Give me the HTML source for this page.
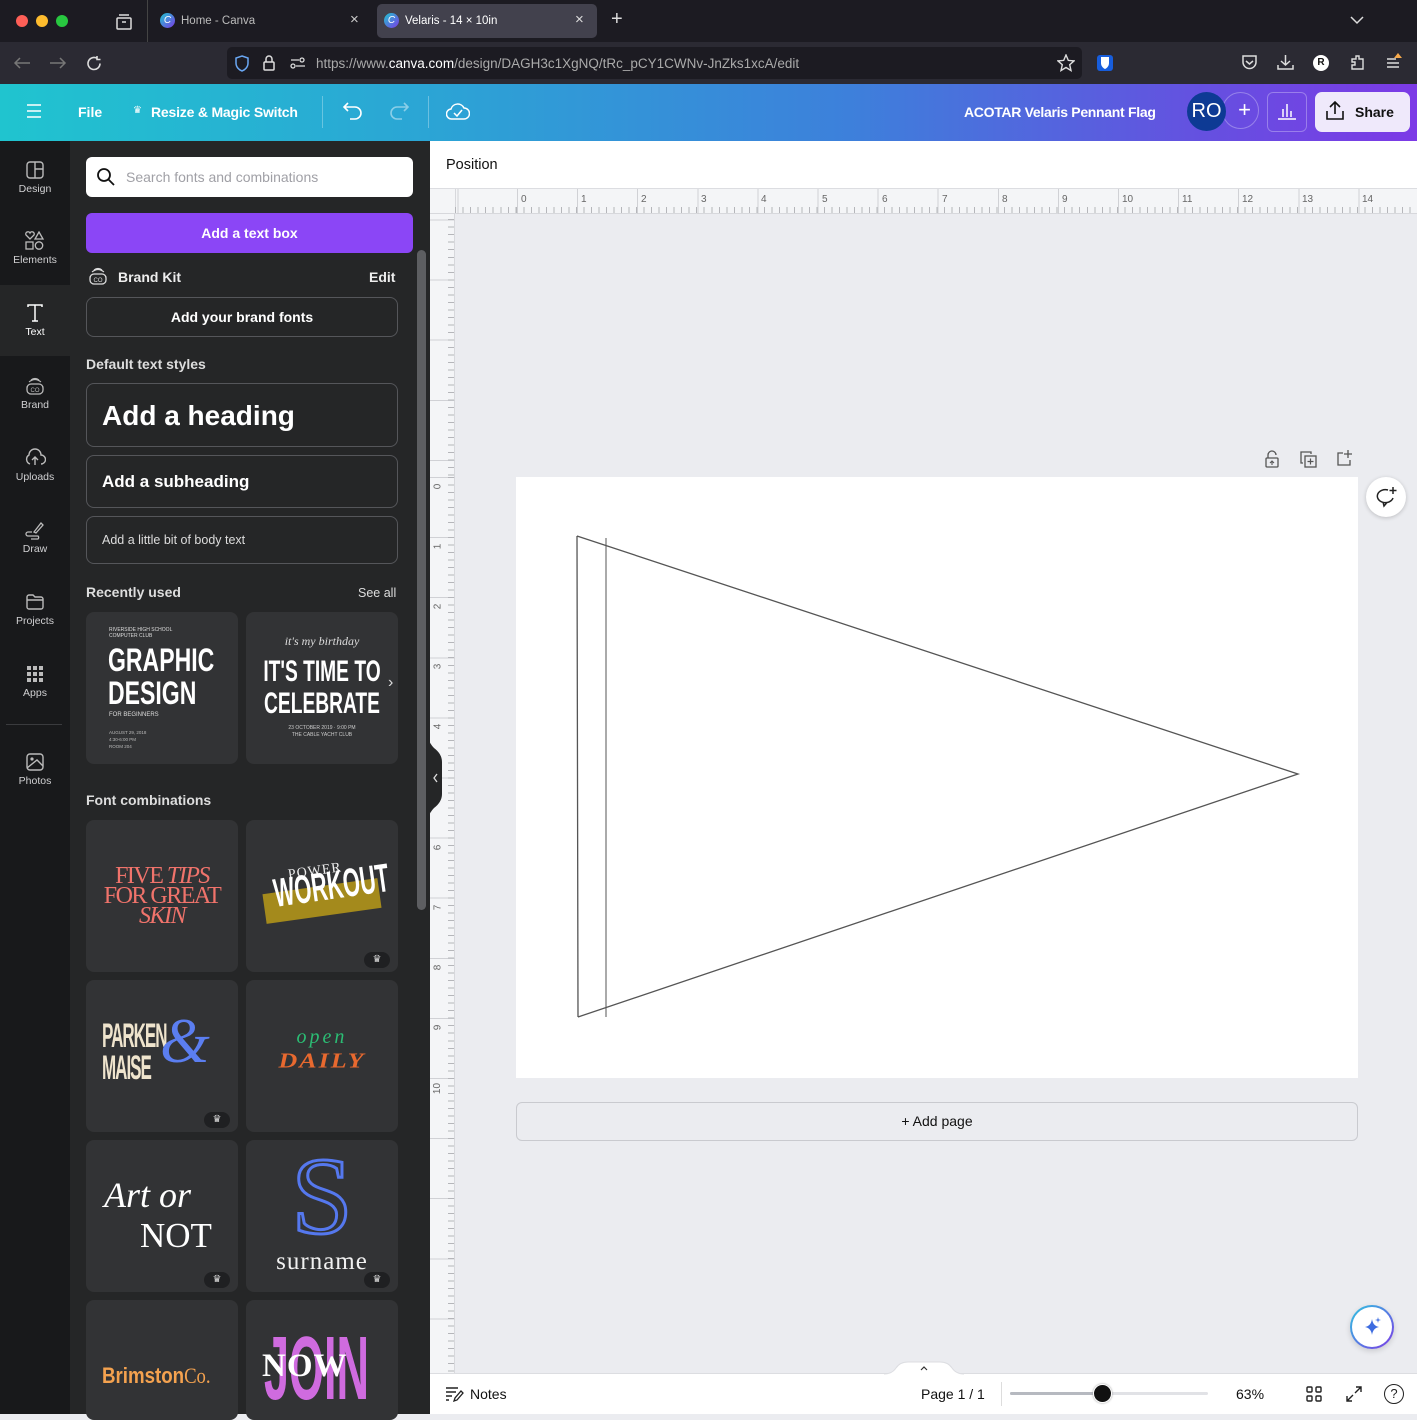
<!DOCTYPE html>
<html><head><meta charset="utf-8">
<style>
*{box-sizing:border-box;margin:0;padding:0}
body{width:1417px;height:1414px;overflow:hidden;position:relative;font-family:"Liberation Sans",sans-serif;background:#ebecf0}
.a{position:absolute}
.w{color:#fff}
.rail{left:0;top:141px;width:70px;height:1273px;background:#18191b}
.ri{position:absolute;left:0;width:70px;text-align:center;color:#d0d0d2;font-size:10.5px}
.ri svg{display:block;margin:0 auto 3px}
.panel{left:70px;top:141px;width:360px;height:1273px;background:#252627}
.card{position:absolute;width:152px;height:152px;background:#323335;border-radius:8px;overflow:hidden}
.crown{position:absolute;right:8px;bottom:4px;width:26px;height:16px;border-radius:8px;background:#1f2022;color:#ddd;font-size:10px;text-align:center;line-height:16px}
.ob{position:absolute;left:86px;width:312px;border:1px solid #55565a;border-radius:8px;color:#fff}
.tl{position:absolute;color:#666;font-size:10px}
.nw{white-space:nowrap}
</style></head><body>
<div class="a" style="left:0;top:0;width:1417px;height:42px;background:#1c1b22"></div>
<div class="a" style="left:16px;top:15px;width:12px;height:12px;border-radius:6px;background:#fe5f57"></div>
<div class="a" style="left:36px;top:15px;width:12px;height:12px;border-radius:6px;background:#febc2e"></div>
<div class="a" style="left:56px;top:15px;width:12px;height:12px;border-radius:6px;background:#28c840"></div>
<svg class="a" style="left:115px;top:13px" width="18" height="17"><rect x="2" y="5" width="14" height="11" fill="none" stroke="#ddd" stroke-width="1.5" rx="1"/><line x1="4" y1="2" x2="14" y2="2" stroke="#ddd" stroke-width="1.5"/><line x1="7" y1="9" x2="11" y2="9" stroke="#ddd" stroke-width="1.5"/></svg>
<div class="a" style="left:147px;top:0;width:1px;height:42px;background:#444"></div>
<div class="a" style="left:160px;top:13px;width:15px;height:15px;border-radius:8px;background:linear-gradient(135deg,#1fc6d0,#7c3ae6);color:#fff;font-size:10px;text-align:center;line-height:15px;font-style:italic">C</div>
<div class="a" style="left:181px;top:15px;color:#bbb;font-size:11.5px">Home - Canva</div>
<div class="a" style="left:350px;top:11px;color:#ccc;font-size:15px">×</div>
<div class="a" style="left:377px;top:4px;width:220px;height:34px;background:#42414d;border-radius:5px"></div>
<div class="a" style="left:384px;top:13px;width:15px;height:15px;border-radius:8px;background:linear-gradient(135deg,#1fc6d0,#7c3ae6);color:#fff;font-size:10px;text-align:center;line-height:15px;font-style:italic">C</div>
<div class="a w" style="left:405px;top:15px;font-size:11.5px">Velaris - 14 × 10in</div>
<div class="a" style="left:575px;top:11px;color:#ddd;font-size:15px">×</div>
<div class="a" style="left:611px;top:8px;color:#ddd;font-size:20px">+</div>
<svg class="a" style="left:1350px;top:15px" width="14" height="10"><path d="M1 2 L7 8 L13 2" fill="none" stroke="#ddd" stroke-width="1.5"/></svg>
<div class="a" style="left:0;top:42px;width:1417px;height:42px;background:#2b2a33"></div>
<svg class="a" style="left:13px;top:56px" width="18" height="14"><path d="M17 7 H2 M7 2 L2 7 L7 12" fill="none" stroke="#777" stroke-width="1.5"/></svg>
<svg class="a" style="left:49px;top:56px" width="18" height="14"><path d="M1 7 H16 M11 2 L16 7 L11 12" fill="none" stroke="#777" stroke-width="1.5"/></svg>
<svg class="a" style="left:86px;top:55px" width="17" height="17"><path d="M14 8.5 A6 6 0 1 1 11 3.3 M11 1 V4.5 H14.5" fill="none" stroke="#ddd" stroke-width="1.6"/></svg>
<div class="a" style="left:227px;top:47px;width:855px;height:32px;background:#1c1b22;border-radius:5px"></div>
<svg class="a" style="left:234px;top:55px" width="16" height="17"><path d="M8 1 L14 3 V8 C14 12 11 15 8 16 C5 15 2 12 2 8 V3 Z" fill="none" stroke="#6aa7f3" stroke-width="1.5"/></svg>
<svg class="a" style="left:262px;top:54px" width="14" height="17"><rect x="2" y="8" width="10" height="8" rx="1" fill="none" stroke="#ddd" stroke-width="1.5"/><path d="M4 8 V5 A3 3 0 0 1 10 5 V8" fill="none" stroke="#ddd" stroke-width="1.5"/></svg>
<svg class="a" style="left:290px;top:57px" width="16" height="12"><path d="M1 3 H9 M6 9 H15" stroke="#ddd" stroke-width="1.3"/><circle cx="12" cy="3" r="2" fill="none" stroke="#ddd" stroke-width="1.3"/><circle cx="3" cy="9" r="2" fill="none" stroke="#ddd" stroke-width="1.3"/></svg>
<div class="a" style="left:316px;top:56px;color:#aaa;font-size:13.5px">https://www.<span style="color:#fff">canva.com</span>/design/DAGH3c1XgNQ/tRc_pCY1CWNv-JnZks1xcA/edit</div>
<svg class="a" style="left:1057px;top:54px" width="18" height="18"><path d="M9 1 L11.3 6.4 L17 6.9 L12.7 10.7 L14 16.5 L9 13.5 L4 16.5 L5.3 10.7 L1 6.9 L6.7 6.4Z" fill="none" stroke="#ddd" stroke-width="1.4"/></svg>
<div class="a" style="left:1097px;top:55px;width:16px;height:16px;background:#175ddc;border-radius:3px"></div>
<svg class="a" style="left:1101px;top:57px" width="8" height="12"><path d="M0 0 H8 V6 C8 9 6 11 4 12 C2 11 0 9 0 6Z" fill="#fff"/></svg>
<svg class="a" style="left:1241px;top:55px" width="17" height="15"><path d="M2 1 H15 V7 A6.5 6.5 0 0 1 2 7 Z" fill="none" stroke="#ddd" stroke-width="1.5"/><path d="M5 6 L8.5 9 L12 6" fill="none" stroke="#ddd" stroke-width="1.5"/></svg>
<svg class="a" style="left:1277px;top:54px" width="17" height="17"><path d="M8.5 1 V11 M4 7 L8.5 11 L13 7 M1 11 V15 H16 V11" fill="none" stroke="#ddd" stroke-width="1.5"/></svg>
<div class="a" style="left:1313px;top:55px;width:16px;height:16px;border-radius:8px;background:#fff;color:#111;font-size:10px;font-weight:bold;text-align:center;line-height:16px">R</div>
<svg class="a" style="left:1349px;top:54px" width="17" height="17"><path d="M3 5 H7 V2 H10 V5 H14 V15 H3 V11 H6 V8 H3 Z" fill="none" stroke="#ddd" stroke-width="1.4"/></svg>
<svg class="a" style="left:1386px;top:52px" width="20" height="18"><path d="M1 7 H10 M1 11 H13 M1 15 H13" stroke="#ddd" stroke-width="1.5"/><path d="M12 1 L16 6 H8Z" fill="#f6a94b"/></svg>
<div class="a" style="left:0;top:84px;width:1417px;height:57px;background:linear-gradient(90deg,#20c4cf 0%,#2ba5d5 30%,#3d80db 60%,#6550e0 85%,#7c3ae6 100%)"></div>
<svg class="a" style="left:26px;top:104px" width="16" height="14"><path d="M1 1 H15 M1 7 H15 M1 13 H15" stroke="#fff" stroke-width="1.6"/></svg>
<div class="a w" style="left:78px;top:104px;font-size:14px;font-weight:bold">File</div>
<div class="a w" style="left:133px;top:105px;font-size:10px">♛</div>
<div class="a w nw" style="left:151px;top:104px;font-size:14px;font-weight:bold;letter-spacing:-0.2px">Resize &amp; Magic Switch</div>
<div class="a" style="left:322px;top:96px;width:1px;height:32px;background:rgba(255,255,255,.3)"></div>
<svg class="a" style="left:342px;top:101px" width="22" height="20"><path d="M6 2 L2 6 L6 10 M2 6 H13 A6 6 0 0 1 13 18 H8" fill="none" stroke="#fff" stroke-width="1.6"/></svg>
<svg class="a" style="left:388px;top:101px" width="22" height="20"><path d="M16 2 L20 6 L16 10 M20 6 H9 A6 6 0 0 0 9 18 H14" fill="none" stroke="rgba(255,255,255,.45)" stroke-width="1.6"/></svg>
<div class="a" style="left:428px;top:96px;width:1px;height:32px;background:rgba(255,255,255,.3)"></div>
<svg class="a" style="left:446px;top:101px" width="24" height="20"><path d="M6 18 A5 5 0 0 1 5 8 A7 7 0 0 1 18 7 A5.5 5.5 0 0 1 18 18 Z" fill="none" stroke="#fff" stroke-width="1.5"/><path d="M8 12 L11 15 L16 9" fill="none" stroke="#fff" stroke-width="1.5"/></svg>
<div class="a w nw" style="left:964px;top:104px;font-size:14px;font-weight:bold;letter-spacing:-0.3px">ACOTAR Velaris Pennant Flag</div>
<div class="a" style="left:1222px;top:92px;width:37px;height:37px;border-radius:19px;border:1px solid rgba(255,255,255,.3);color:#fff;font-size:22px;text-align:right;padding-right:7px;line-height:34px">+</div>
<div class="a" style="left:1187px;top:92px;width:39px;height:39px;border-radius:20px;background:#0d3a94;color:#fff;font-size:20px;text-align:center;line-height:39px">RO</div>
<div class="a" style="left:1267px;top:92px;width:40px;height:40px;border-radius:6px;border:1px solid rgba(255,255,255,.3)"></div>
<svg class="a" style="left:1277px;top:101px" width="20" height="20"><path d="M1 18 H19 M6 16 V8 M10 16 V3 M14 16 V10" stroke="#fff" stroke-width="1.5"/></svg>
<div class="a" style="left:1315px;top:92px;width:95px;height:40px;border-radius:7px;background:#efe9fb"></div>
<svg class="a" style="left:1325px;top:101px" width="20" height="20"><path d="M10 13 V2 M5 6 L10 1 L15 6 M2 10 V18 H18 V10" fill="none" stroke="#111" stroke-width="1.6"/></svg>
<div class="a" style="left:1355px;top:104px;font-size:14px;font-weight:bold;color:#111">Share</div>
<div class="a rail"></div>
<div class="a" style="left:0;top:285px;width:70px;height:71px;background:#252627"></div>
<div class="ri" style="top:160px"><svg width="20" height="20"><rect x="2" y="2" width="16" height="16" rx="3" fill="none" stroke="#bbb" stroke-width="1.4"/><path d="M10 2 V18 M10 9 H18" stroke="#bbb" stroke-width="1.4"/></svg>Design</div>
<div class="ri" style="top:231px"><svg width="22" height="20"><path d="M6 8 L2 4 A2 2 0 0 1 6 2 A2 2 0 0 1 10 4Z M15 1 L19 8 H11Z" fill="none" stroke="#bbb" stroke-width="1.3"/><rect x="2" y="11" width="7" height="7" fill="none" stroke="#bbb" stroke-width="1.3"/><circle cx="15" cy="14.5" r="3.7" fill="none" stroke="#bbb" stroke-width="1.3"/></svg>Elements</div>
<div class="ri" style="top:303px;color:#fff"><svg width="20" height="20"><path d="M3 4 V2 H17 V4 M10 2 V18 M7 18 H13" fill="none" stroke="#fff" stroke-width="1.5"/></svg>Text</div>
<div class="ri" style="top:376px"><svg width="20" height="20"><rect x="2" y="8" width="16" height="10" rx="4" fill="none" stroke="#bbb" stroke-width="1.3"/><path d="M4 6 Q10 1 16 6 M6 4 Q10 1 14 4" fill="none" stroke="#bbb" stroke-width="1.1"/><text x="10" y="16" font-size="6" fill="#bbb" text-anchor="middle" font-family="Liberation Sans">CO</text></svg>Brand</div>
<div class="ri" style="top:448px"><svg width="22" height="20"><path d="M6 16 A5 5 0 0 1 5 7 A6 6 0 0 1 17 7 A4.5 4.5 0 0 1 17 16" fill="none" stroke="#bbb" stroke-width="1.4"/><path d="M11 17 V9 M8 12 L11 9 L14 12" fill="none" stroke="#bbb" stroke-width="1.4"/></svg>Uploads</div>
<div class="ri" style="top:520px"><svg width="22" height="20"><path d="M10 12 L17 3 L19 5 L12 13Z M8 12 H4 A2 2 0 0 0 4 16 H14 A2 2 0 0 1 14 19 H7" fill="none" stroke="#bbb" stroke-width="1.3"/></svg>Draw</div>
<div class="ri" style="top:592px"><svg width="20" height="20"><path d="M2 5 A2 2 0 0 1 4 3 H8 L10 5 H16 A2 2 0 0 1 18 7 V15 A2 2 0 0 1 16 17 H4 A2 2 0 0 1 2 15 Z M2 8 H18" fill="none" stroke="#bbb" stroke-width="1.4"/></svg>Projects</div>
<div class="ri" style="top:664px"><svg width="20" height="20"><g fill="#bbb"><rect x="2" y="2" width="4" height="4"/><rect x="8" y="2" width="4" height="4"/><rect x="14" y="2" width="4" height="4"/><rect x="2" y="8" width="4" height="4"/><rect x="8" y="8" width="4" height="4"/><rect x="14" y="8" width="4" height="4"/><rect x="2" y="14" width="4" height="4"/><rect x="8" y="14" width="4" height="4"/><rect x="14" y="14" width="4" height="4"/></g></svg>Apps</div>
<div class="a" style="left:6px;top:724px;width:56px;height:1px;background:#3a3b3e"></div>
<div class="ri" style="top:752px"><svg width="20" height="20"><rect x="2" y="2" width="16" height="16" rx="3" fill="none" stroke="#bbb" stroke-width="1.4"/><circle cx="7" cy="7" r="1.6" fill="#bbb"/><path d="M2 16 L12 8 L18 14" fill="none" stroke="#bbb" stroke-width="1.4"/></svg>Photos</div>
<div class="a panel"></div>
<div class="a" style="left:417px;top:250px;width:9px;height:660px;border-radius:5px;background:#5d5e61"></div>
<div class="a" style="left:86px;top:157px;width:327px;height:40px;background:#fff;border-radius:6px"></div>
<svg class="a" style="left:96px;top:167px" width="20" height="20"><circle cx="8" cy="8" r="6" fill="none" stroke="#111" stroke-width="1.8"/><path d="M12.5 12.5 L18 18" stroke="#111" stroke-width="1.8"/></svg>
<div class="a" style="left:126px;top:169px;color:#a0a0a6;font-size:14px">Search fonts and combinations</div>
<div class="a" style="left:86px;top:213px;width:327px;height:40px;background:#8b46f6;border-radius:6px;color:#fff;font-size:14px;font-weight:bold;text-align:center;line-height:40px">Add a text box</div>
<svg class="a" style="left:88px;top:266px" width="20" height="20"><rect x="2" y="8" width="16" height="10" rx="4" fill="none" stroke="#ddd" stroke-width="1.3"/><path d="M4 6 Q10 1 16 6 M6 4 Q10 1 14 4" fill="none" stroke="#ddd" stroke-width="1.1"/><text x="10" y="16" font-size="6" fill="#ddd" text-anchor="middle" font-family="Liberation Sans">CO</text></svg>
<div class="a" style="left:118px;top:269px;color:#eee;font-size:14px;font-weight:bold">Brand Kit</div>
<div class="a" style="left:369px;top:269px;color:#eee;font-size:14px;font-weight:bold">Edit</div>
<div class="ob" style="top:297px;height:40px;text-align:center;line-height:38px;font-size:14px;font-weight:bold">Add your brand fonts</div>
<div class="a" style="left:86px;top:356px;color:#ddd;font-size:14px;font-weight:bold">Default text styles</div>
<div class="ob" style="top:383px;height:64px;font-size:28px;font-weight:bold;padding:16px 0 0 15px">Add a heading</div>
<div class="ob" style="top:455px;height:53px;font-size:17px;font-weight:bold;padding:16px 0 0 15px">Add a subheading</div>
<div class="ob" style="top:516px;height:48px;font-size:12.5px;padding:16px 0 0 15px;color:#ddd">Add a little bit of body text</div>
<div class="a" style="left:86px;top:584px;color:#ddd;font-size:14px;font-weight:bold">Recently used</div>
<div class="a" style="left:358px;top:586px;color:#ddd;font-size:12.5px">See all</div>
<div class="card" style="left:86px;top:612px">
 <div class="a nw" style="left:23px;top:15px;color:#ddd;font-size:5px;line-height:6px">RIVERSIDE HIGH SCHOOL<br>COMPUTER CLUB</div>
 <div class="a nw" style="left:22px;top:32px;color:#fff;font-size:32px;font-weight:bold;line-height:33px;transform:scaleX(.72);transform-origin:left">GRAPHIC<br>DESIGN</div>
 <div class="a nw" style="left:23px;top:100px;color:#ddd;font-size:6px">FOR BEGINNERS</div>
 <div class="a nw" style="left:23px;top:117px;color:#bbb;font-size:4.5px;line-height:7px">AUGUST 29, 2018<br>4:30-6:00 PM<br>ROOM 204</div>
</div>
<div class="card" style="left:246px;top:612px">
 <div class="a nw" style="left:0;width:152px;top:22px;text-align:center;color:#ddd;font-size:12px;font-style:italic;font-family:'Liberation Serif',serif">it's my birthday</div>
 <div class="a nw" style="left:-30px;width:212px;top:44px;text-align:center;color:#fff;font-size:30px;font-weight:bold;line-height:32px;transform:scaleX(.64)">IT'S TIME TO<br>CELEBRATE</div>
 <div class="a nw" style="left:0;width:152px;top:113px;text-align:center;color:#ccc;font-size:5px;line-height:7px">23 OCTOBER 2019 · 9:00 PM<br>THE CABLE YACHT CLUB</div>
 <div class="a" style="left:142px;top:62px;color:#ddd;font-size:16px">›</div>
</div>
<div class="a" style="left:86px;top:792px;color:#ddd;font-size:14px;font-weight:bold">Font combinations</div>
<div class="card" style="left:86px;top:820px">
 <div class="a nw" style="left:0;width:152px;top:46px;text-align:center;color:#f0736b;font-family:'Liberation Serif',serif;font-size:24px;line-height:20px;letter-spacing:-1.5px">FIVE <i>TIPS</i><br>FOR GREAT<br><i>SKIN</i></div>
</div>
<div class="card" style="left:246px;top:820px">
 <div class="a nw" style="left:42px;top:44px;color:#eee;font-family:'Liberation Serif',serif;font-size:14px;letter-spacing:1px;transform:rotate(-8deg)">POWER</div>
 <div class="a" style="left:18px;top:66px;width:116px;height:30px;background:#a48a1c;transform:rotate(-8deg)"></div>
 <div class="a nw" style="left:28px;top:52px;color:#fff;font-weight:bold;font-size:40px;transform:rotate(-8deg) scaleX(.55);transform-origin:left">WORKOUT</div>
 <div class="crown">♛</div>
</div>
<div class="card" style="left:86px;top:980px">
 <div class="a nw" style="left:16px;top:40px;color:#efe4cd;font-weight:bold;font-size:34px;line-height:32px;transform:scaleX(.5);transform-origin:left;letter-spacing:-2px">PARKEN<br>MAISE</div>
 <div class="a" style="left:74px;top:24px;color:#5b7ef0;font-family:'Liberation Serif',serif;font-style:italic;font-size:64px">&amp;</div>
 <div class="crown">♛</div>
</div>
<div class="card" style="left:246px;top:980px">
 <div class="a" style="left:0;width:152px;top:46px;text-align:center;color:#2bbd74;font-family:'Liberation Serif',serif;font-style:italic;font-size:20px;letter-spacing:3px">open</div>
 <div class="a" style="left:0;width:152px;top:66px;text-align:center;color:#e8692f;font-family:'Liberation Serif',serif;font-weight:bold;font-style:italic;font-size:26px;letter-spacing:2px;transform:scaleY(.8)">DAILY</div>
</div>
<div class="card" style="left:86px;top:1140px">
 <div class="a nw" style="left:18px;top:34px;color:#fff;font-family:'Liberation Serif',serif;font-style:italic;font-size:36px">Art or</div>
 <div class="a nw" style="left:54px;top:76px;color:#fff;font-family:'Liberation Serif',serif;font-size:35px">NOT</div>
 <div class="crown">♛</div>
</div>
<div class="card" style="left:246px;top:1140px">
 <div class="a" style="left:0;width:152px;top:6px;text-align:center;color:#323335;font-family:'Liberation Serif',serif;font-size:110px;line-height:100px;-webkit-text-stroke:3px #5578ee">S</div>
 <div class="a" style="left:0;width:152px;top:108px;text-align:center;color:#f0f0f0;font-family:'Liberation Serif',serif;font-size:25px;letter-spacing:1px">surname</div>
 <div class="crown">♛</div>
</div>
<div class="card" style="left:86px;top:1300px;height:120px">
 <div class="a nw" style="left:16px;top:63px;color:#f4a24f;font-weight:bold;font-size:22px;transform:scaleX(.85);transform-origin:left">Brimston<span style="font-weight:normal;font-family:'Liberation Serif',serif">Co.</span></div>
</div>
<div class="card" style="left:246px;top:1300px;height:120px">
 <div class="a nw" style="left:18px;top:24px;color:#cf6bdf;font-weight:bold;font-size:90px;line-height:90px;transform:scaleX(.5);transform-origin:left">JOIN</div>
 <div class="a nw" style="left:16px;top:48px;color:#fff;font-family:'Liberation Serif',serif;font-weight:bold;font-size:33px;letter-spacing:1px">NOW</div>
</div>
<div class="a" style="left:430px;top:141px;width:987px;height:48px;background:#fff;border-bottom:1px solid #dcdde1"></div>
<div class="a" style="left:446px;top:157px;font-size:14.5px;color:#111">Position</div>
<div class="a" style="left:430px;top:189px;width:987px;height:25px;background:#f4f5f7;border-bottom:1px solid #d7d8dc"></div>
<div class="a" style="left:455px;top:189px;width:962px;height:25px;border-left:1px solid #d7d8dc;background:repeating-linear-gradient(90deg,#d0d1d5 0 1px,transparent 1px 60.1px);background-position:61px 0"></div>
<div class="a" style="left:455px;top:207px;width:962px;height:6px;background:repeating-linear-gradient(90deg,#b5b6ba 0 1px,transparent 1px 7.51px);background-position:61px 0"></div>
<div class="a" style="left:430px;top:214px;width:25px;height:1159px;background:#f4f5f7;border-right:1px solid #d7d8dc"></div>
<div class="a" style="left:430px;top:214px;width:25px;height:1159px;background:repeating-linear-gradient(180deg,#d0d1d5 0 1px,transparent 1px 60.1px);background-position:0 263px"></div>
<div class="a" style="left:448px;top:214px;width:6px;height:1159px;background:repeating-linear-gradient(180deg,#b5b6ba 0 1px,transparent 1px 7.51px);background-position:0 263px"></div>
<div class="tl" style="left:521px;top:194px">0</div><div class="tl" style="left:581px;top:194px">1</div><div class="tl" style="left:641px;top:194px">2</div><div class="tl" style="left:701px;top:194px">3</div><div class="tl" style="left:761px;top:194px">4</div><div class="tl" style="left:822px;top:194px">5</div><div class="tl" style="left:882px;top:194px">6</div><div class="tl" style="left:942px;top:194px">7</div><div class="tl" style="left:1002px;top:194px">8</div><div class="tl" style="left:1062px;top:194px">9</div><div class="tl" style="left:1122px;top:194px">10</div><div class="tl" style="left:1182px;top:194px">11</div><div class="tl" style="left:1242px;top:194px">12</div><div class="tl" style="left:1302px;top:194px">13</div><div class="tl" style="left:1362px;top:194px">14</div>
<div class="tl" style="left:435px;top:481px;transform:rotate(-90deg)">0</div><div class="tl" style="left:435px;top:541px;transform:rotate(-90deg)">1</div><div class="tl" style="left:435px;top:601px;transform:rotate(-90deg)">2</div><div class="tl" style="left:435px;top:661px;transform:rotate(-90deg)">3</div><div class="tl" style="left:435px;top:721px;transform:rotate(-90deg)">4</div><div class="tl" style="left:435px;top:782px;transform:rotate(-90deg)">5</div><div class="tl" style="left:435px;top:842px;transform:rotate(-90deg)">6</div><div class="tl" style="left:435px;top:902px;transform:rotate(-90deg)">7</div><div class="tl" style="left:435px;top:962px;transform:rotate(-90deg)">8</div><div class="tl" style="left:435px;top:1022px;transform:rotate(-90deg)">9</div><div class="tl" style="left:432px;top:1083px;transform:rotate(-90deg)">10</div>
<svg class="a" style="left:428px;top:738px" width="16" height="80"><path d="M0 0 Q2 6 6 10 Q14 16 14 24 V56 Q14 64 6 70 Q2 74 0 80Z" fill="#252627"/><path d="M9 36 L6 40 L9 44" fill="none" stroke="#ddd" stroke-width="1.3"/></svg>
<div class="a" style="left:516px;top:477px;width:842px;height:601px;background:#fff"></div>
<svg class="a" style="left:0;top:0" width="1417" height="1414"><g fill="none" stroke="#555" stroke-width="1.3"><path d="M577 536 L578 1017 M577 536 L1298 774 L578 1017"/><path d="M606 538 V1017" stroke-width="1"/></g></svg>
<svg class="a" style="left:1263px;top:450px" width="18" height="18"><rect x="3" y="8" width="12" height="9" rx="1" fill="none" stroke="#555" stroke-width="1.3"/><path d="M5 8 V5 A4 4 0 0 1 13 5" fill="none" stroke="#555" stroke-width="1.3"/><path d="M9 15 V11 M7 13 L9 11 L11 13" fill="none" stroke="#555" stroke-width="1.1"/></svg>
<svg class="a" style="left:1299px;top:450px" width="18" height="18"><path d="M4 13 H2 V2 H12 V4" fill="none" stroke="#555" stroke-width="1.3"/><rect x="6" y="6" width="11" height="11" fill="none" stroke="#555" stroke-width="1.3"/><path d="M11.5 8.5 V14.5 M8.5 11.5 H14.5" stroke="#555" stroke-width="1.2"/></svg>
<svg class="a" style="left:1335px;top:449px" width="18" height="18"><path d="M8 4 H3 V16 H15 V11" fill="none" stroke="#555" stroke-width="1.3"/><path d="M13 1 V9 M9 5 H17" stroke="#555" stroke-width="1.3"/></svg>
<div class="a" style="left:1366px;top:477px;width:40px;height:40px;border-radius:20px;background:#fff;box-shadow:0 1px 4px rgba(0,0,0,.2)"></div>
<svg class="a" style="left:1375px;top:485px" width="24" height="24"><path d="M13 5 A8 6.5 0 1 0 18 13 M8 17 L9 21 L12 17.5" fill="none" stroke="#222" stroke-width="1.5"/><path d="M18 2 V9 M14.5 5.5 H21.5" stroke="#222" stroke-width="1.5"/></svg>
<div class="a" style="left:516px;top:1102px;width:842px;height:39px;border:1px solid #c9cacf;border-radius:6px;background:#ebecf0;text-align:center;line-height:37px;font-size:14px;color:#111">+ Add page</div>
<div class="a" style="left:1350px;top:1305px;width:44px;height:44px;border-radius:22px;background:linear-gradient(135deg,#2ec5e0,#7c3ae6);box-shadow:0 2px 6px rgba(0,0,0,.15)"></div>
<div class="a" style="left:1352px;top:1307px;width:40px;height:40px;border-radius:20px;background:#fff"></div>
<svg class="a" style="left:1360px;top:1315px" width="24" height="24"><path d="M12 4 Q13 11 19 12 Q13 13 12 20 Q11 13 5 12 Q11 11 12 4Z" fill="#3d6ce0"/><path d="M18 2 L18.6 4.4 L21 5 L18.6 5.6 L18 8 L17.4 5.6 L15 5 L17.4 4.4Z" fill="#3d6ce0"/></svg>
<div class="a" style="left:430px;top:1373px;width:987px;height:41px;background:#fff;border-top:1px solid #dcdde1"></div>
<svg class="a" style="left:884px;top:1361px" width="80" height="14"><path d="M0 13 Q8 13 12 7 Q16 1 24 1 H56 Q64 1 68 7 Q72 13 80 13" fill="#fff" stroke="#dcdde1"/><path d="M37 9 L40 6 L43 9" fill="none" stroke="#333" stroke-width="1.2"/></svg>
<svg class="a" style="left:445px;top:1386px" width="20" height="16"><path d="M1 2 H13 M1 6 H11 M1 10 H7 M1 14 H4" stroke="#222" stroke-width="1.4"/><path d="M9 15 L10 12 L16 5 L18 7 L12 14Z" fill="none" stroke="#222" stroke-width="1.3"/></svg>
<div class="a" style="left:470px;top:1386px;font-size:14px;color:#111">Notes</div>
<div class="a" style="left:921px;top:1386px;font-size:14px;color:#111">Page 1 / 1</div>
<div class="a" style="left:1001px;top:1382px;width:1px;height:24px;background:#ddd"></div>
<div class="a" style="left:1010px;top:1392px;width:198px;height:3px;border-radius:2px;background:#e1e2e6"></div>
<div class="a" style="left:1010px;top:1392px;width:92px;height:3px;border-radius:2px;background:#b6b9c0"></div>
<div class="a" style="left:1093px;top:1384px;width:19px;height:19px;border-radius:10px;background:#111;border:1px solid #fff;box-shadow:0 0 2px #999"></div>
<div class="a" style="left:1236px;top:1386px;font-size:14px;color:#111">63%</div>
<svg class="a" style="left:1305px;top:1385px" width="18" height="18"><g fill="none" stroke="#222" stroke-width="1.4"><rect x="2" y="2" width="5" height="5" rx="1"/><rect x="11" y="2" width="5" height="5" rx="1"/><rect x="2" y="11" width="5" height="5" rx="1"/><rect x="11" y="11" width="5" height="5" rx="1"/></g></svg>
<svg class="a" style="left:1344px;top:1385px" width="20" height="18"><path d="M12 2 H17 V7 M17 2 L11 8 M8 16 H3 V11 M3 16 L9 10" fill="none" stroke="#222" stroke-width="1.4"/></svg>
<div class="a" style="left:1384px;top:1384px;width:20px;height:20px;border-radius:10px;border:1.5px solid #222;text-align:center;line-height:18px;font-size:13px;color:#222">?</div>
</body></html>
